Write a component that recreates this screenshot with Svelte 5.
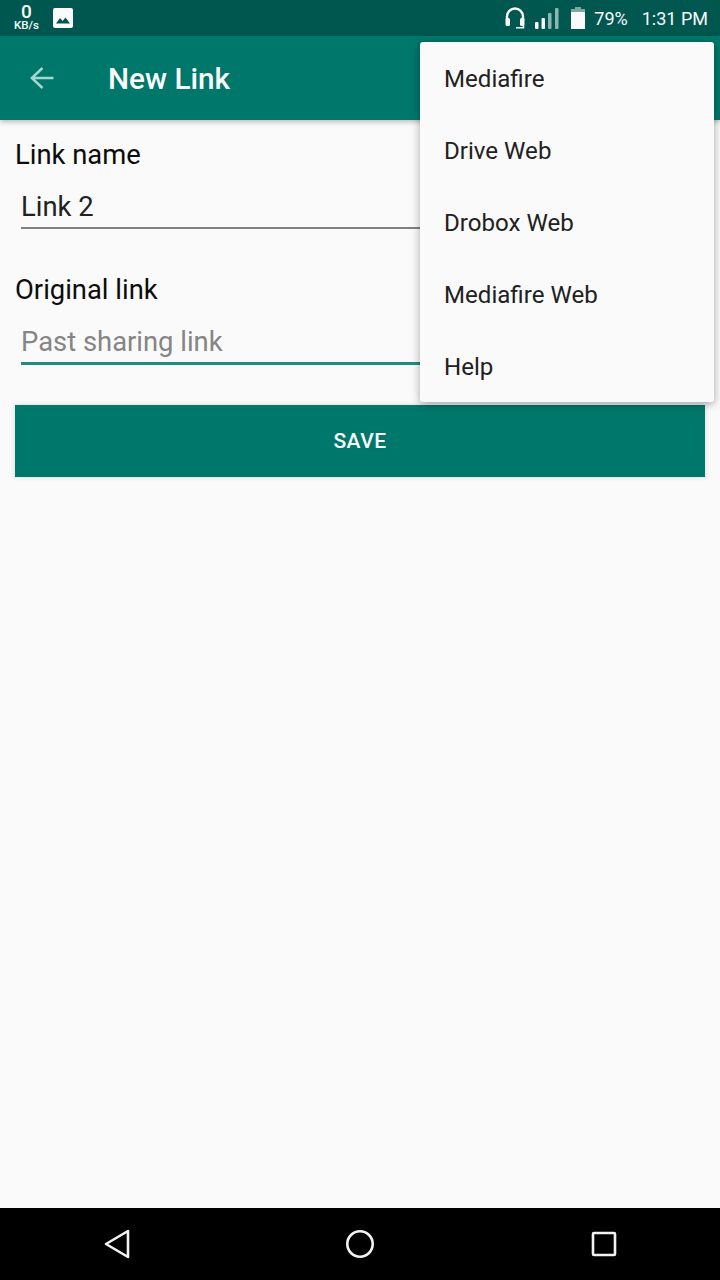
<script>
  const items = ['Mediafire', 'Drive Web', 'Drobox Web', 'Mediafire Web', 'Help'];
</script>

<div class="screen">
  <div class="status">
    <div class="left">
      <div class="speed"><span class="num">0</span><span class="unit">KB/s</span></div>
      <svg class="pic" width="20" height="20" viewBox="0 0 20 20">
        <rect width="20" height="20" rx="2" fill="#fafafa"/>
        <path d="M3 15.5 L7 10 L9.6 13 L12.5 9.5 L17 15.5 Z" fill="#00574f"/>
      </svg>
    </div>
    <div class="right">
      <svg class="hs" width="22" height="24" viewBox="0 0 22 24" fill="none">
        <path d="M3 14 V10.5 a8 8 0 0 1 16 0 V14" stroke="#fafafa" stroke-width="2.4"/>
        <rect x="1.5" y="12" width="4.5" height="8" rx="1.5" fill="#fafafa"/>
        <rect x="16" y="12" width="4.5" height="8" rx="1.5" fill="#fafafa"/>
        <path d="M19.5 20 V21.8 H12" stroke="#fafafa" stroke-width="1.6"/>
      </svg>
      <svg class="sig" width="24" height="22" viewBox="0 0 24 22">
        <rect x="0" y="15" width="3.5" height="7" rx="1" fill="#fafafa"/>
        <rect x="6.5" y="11" width="3.5" height="11" rx="1" fill="#fafafa"/>
        <rect x="13" y="6" width="3.5" height="16" rx="1" fill="#8fb5b0"/>
        <rect x="20" y="1" width="3.5" height="21" rx="1" fill="#8fb5b0"/>
      </svg>
      <svg class="bat" width="14" height="22" viewBox="0 0 14 22">
        <path d="M4 0 H10 V2 H14 V22 H0 V2 H4 Z" fill="#fafafa"/>
        <path d="M4 0 H10 V2 H14 V5 H0 V2 H4 Z" fill="#7fa8a3"/>
      </svg>
      <span class="pct">79%</span>
      <span class="time">1:31 PM</span>
    </div>
  </div>

  <header class="bar">
    <svg class="back" width="24" height="24" viewBox="0 0 24 24" fill="none">
      <path d="M23.5 12 H2 M12.5 2 L1.8 12 L12.5 22" stroke="#a5d8d0" stroke-width="2.4"/>
    </svg>
    <h1>New Link</h1>
  </header>

  <main class="form">
    <div class="label first">Link name</div>
    <div class="field value">Link 2</div>
    <div class="label second">Original link</div>
    <div class="field hint">Past sharing link</div>
    <button class="save">SAVE</button>
  </main>

  <nav class="nav">
    <svg width="26" height="30" viewBox="0 0 26 30" fill="none">
      <path d="M24 2 V28 L2 15 Z" stroke="#f2f2f2" stroke-width="2.6" stroke-linejoin="round"/>
    </svg>
    <svg width="30" height="30" viewBox="0 0 30 30" fill="none">
      <circle cx="15" cy="15" r="12.7" stroke="#f2f2f2" stroke-width="2.6"/>
    </svg>
    <svg width="26" height="26" viewBox="0 0 26 26" fill="none">
      <rect x="2" y="2" width="22" height="22" rx="1" stroke="#f2f2f2" stroke-width="2.6"/>
    </svg>
  </nav>

  <div class="menu">
    {#each items as item}
      <div class="item">{item}</div>
    {/each}
  </div>
</div>

<style>
  :global(body) { margin: 0; }
  .screen {
    position: relative;
    width: 720px;
    height: 1280px;
    display: flex;
    flex-direction: column;
    background: #fafafa;
    overflow: hidden;
    font-family: Roboto, "Liberation Sans", sans-serif;
  }
  .status {
    height: 36px;
    flex: none;
    display: flex;
    justify-content: space-between;
    align-items: center;
    background: #00574f;
    color: #fafafa;
    padding: 0 12px 0 13px;
    box-sizing: border-box;
  }
  .left { display: flex; align-items: center; gap: 13px; }
  .speed { display: flex; flex-direction: column; align-items: center; width: 27px; }
  .num { font-size: 19px; font-weight: 500; height: 15px; line-height: 15px; margin-top: -1px; }
  .unit { font-size: 11.5px; font-weight: 500; height: 11px; line-height: 11px; margin-top: 1px; white-space: nowrap; }
  .pic { margin-top: -1px; }
  .right { display: flex; align-items: center; }
  .hs { margin-right: 9px; }
  .sig { margin-right: 12px; }
  .bat { margin-right: 9px; }
  .pct { font-size: 18px; margin-right: 14px; }
  .time { font-size: 18px; }
  .bar {
    height: 84px;
    flex: none;
    display: flex;
    align-items: center;
    background: #00776b;
    padding-left: 30px;
    box-sizing: border-box;
    box-shadow: 0 2px 5px rgba(0, 0, 0, 0.25);
    z-index: 1;
  }
  .back { margin-right: 54px; }
  h1 { margin: 0; font-size: 29.7px; font-weight: 500; color: #fafafa; }
  .form { flex: 1; display: flex; flex-direction: column; padding: 0 15px; }
  .label { font-size: 27.4px; color: #0c0c0c; line-height: 32px; }
  .first { margin-top: 19px; }
  .second { margin-top: 45px; }
  .field {
    line-height: 38px;
    font-size: 27.4px;
    margin-left: 6px;
    box-sizing: border-box;
  }
  .value { margin-top: 17px; height: 41px; color: #212121; border-bottom: 2px solid #808080; }
  .hint { margin-top: 17px; height: 42px; color: #858585; border-bottom: 3px solid #1f8c80; }
  .save {
    margin-top: 40px;
    height: 72px;
    border: 0;
    background: #00776b;
    color: #fafafa;
    font: 500 21px Roboto, "Liberation Sans", sans-serif;
    letter-spacing: 0.5px;
    box-shadow: 0 0 5px rgba(0, 0, 0, 0.15);
  }
  .nav {
    height: 72px;
    flex: none;
    background: #000;
    display: grid;
    grid-template-columns: 117px 243px 244px;
    align-items: center;
  }
  .nav svg { justify-self: end; transform: translateX(13px); }
  .nav svg:nth-child(2) { transform: translateX(15px); }
  .menu {
    position: absolute;
    left: 420px;
    top: 42px;
    width: 294px;
    height: 360px;
    background: #fafafa;
    border-radius: 3px;
    box-shadow: 0 2px 8px rgba(0, 0, 0, 0.35);
    z-index: 2;
  }
  .item {
    height: 72px;
    line-height: 74px;
    padding-left: 24px;
    font-size: 24.1px;
    color: #212121;
  }
</style>
